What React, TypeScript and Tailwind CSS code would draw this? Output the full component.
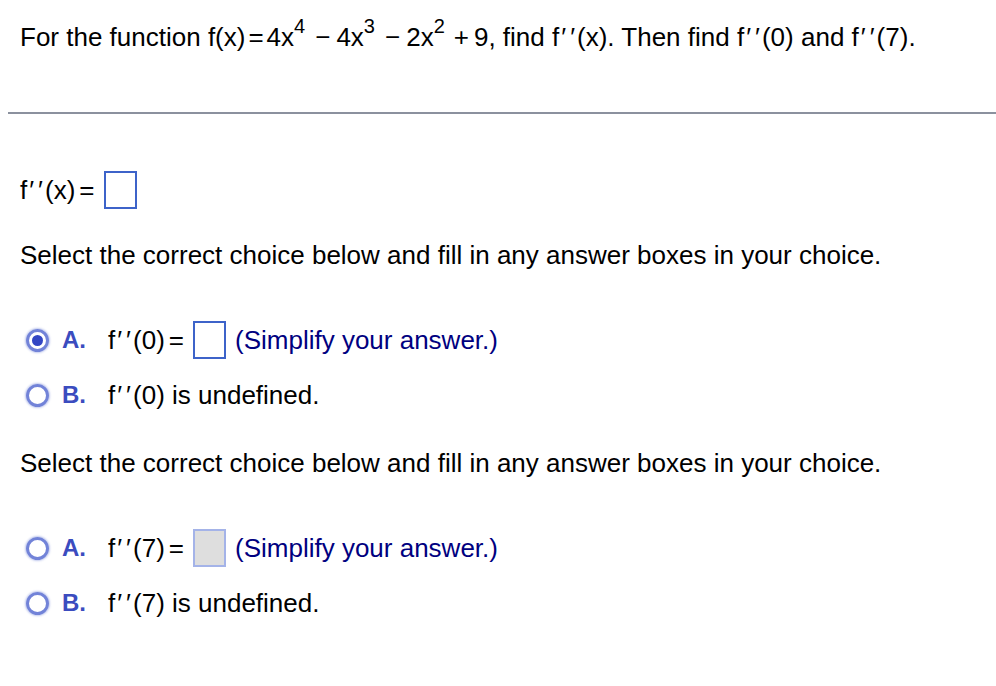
import type { ReactNode } from "react"

const font = { fontFamily: '"Liberation Sans", Arial, sans-serif' }

function Sup({ children }: { children: ReactNode }) {
  return <span className="relative -top-[13px] text-[20px] leading-none">{children}</span>
}

function Fpp({ arg }: { arg: string }) {
  return (
    <span>
      f<span className="ml-[2px] mr-[4px]">′</span>
      <span className="mr-[2px]">′</span>({arg})
    </span>
  )
}

function Box({ disabled = false }: { disabled?: boolean }) {
  return (
    <span
      className={
        disabled
          ? "ml-[9px] mr-[9px] inline-block h-[38px] w-[33px] border-2 border-[#a4b3e8] bg-[#dedede]"
          : "ml-[9px] mr-[9px] inline-block h-[38px] w-[33px] border-2 border-[#3d63c9] bg-white"
      }
    />
  )
}

function Radio({ checked = false }: { checked?: boolean }) {
  return (
    <span className="flex h-[23px] w-[23px] items-center justify-center rounded-full border-[3px] border-[#7283d8] shadow-[0_0_2px_1px_rgba(114,131,216,0.45)]">
      {checked && <span className="h-[11px] w-[11px] rounded-full bg-[#3346c4]" />}
    </span>
  )
}

function Choice({
  letter,
  checked,
  children,
}: {
  letter: string
  checked?: boolean
  children: ReactNode
}) {
  return (
    <div className="flex h-[44px] items-center">
      <div className="flex w-[42px] pl-[6px]">
        <Radio checked={checked} />
      </div>
      <span className="w-[46px] text-[24px] font-bold text-[#3b4cbf]">{letter}</span>
      <span className="flex items-center">{children}</span>
    </div>
  )
}

export default function App() {
  return (
    <div className="min-h-screen bg-white text-[26px] leading-[30px] text-black" style={font}>
      <div className="px-[20px] pt-[22px] pb-[60px]">
        For the function f(x)<span className="mx-[3px]">=</span>4x<Sup>4</Sup>
        <span className="ml-[10px] mr-[6px]">−</span>4x<Sup>3</Sup>
        <span className="ml-[10px] mr-[6px]">−</span>2x<Sup>2</Sup>
        <span className="ml-[9px] mr-[5px]">+</span>9, find <Fpp arg="x" />. Then find <Fpp arg="0" /> and{" "}
        <Fpp arg="7" />.
      </div>
      <div className="ml-[8px] h-[2px] bg-[#8b919e]" />
      <div className="px-[20px]">
        <div className="mt-[57px] flex items-center">
          <Fpp arg="x" />
          <span className="ml-[4px]">=</span>
          <Box />
        </div>
        <div className="mt-[31px]">Select the correct choice below and fill in any answer boxes in your choice.</div>
        <div className="mt-[48px] flex flex-col gap-[11px]">
          <Choice letter="A." checked>
            <Fpp arg="0" />
            <span className="ml-[4px]">=</span>
            <Box />
            <span className="text-[#000080]">(Simplify your answer.)</span>
          </Choice>
          <Choice letter="B.">
            <span>
              <Fpp arg="0" /> is undefined.
            </span>
          </Choice>
        </div>
        <div className="mt-[31px]">Select the correct choice below and fill in any answer boxes in your choice.</div>
        <div className="mt-[48px] flex flex-col gap-[11px]">
          <Choice letter="A.">
            <Fpp arg="7" />
            <span className="ml-[4px]">=</span>
            <Box disabled />
            <span className="text-[#000080]">(Simplify your answer.)</span>
          </Choice>
          <Choice letter="B.">
            <span>
              <Fpp arg="7" /> is undefined.
            </span>
          </Choice>
        </div>
      </div>
    </div>
  )
}
